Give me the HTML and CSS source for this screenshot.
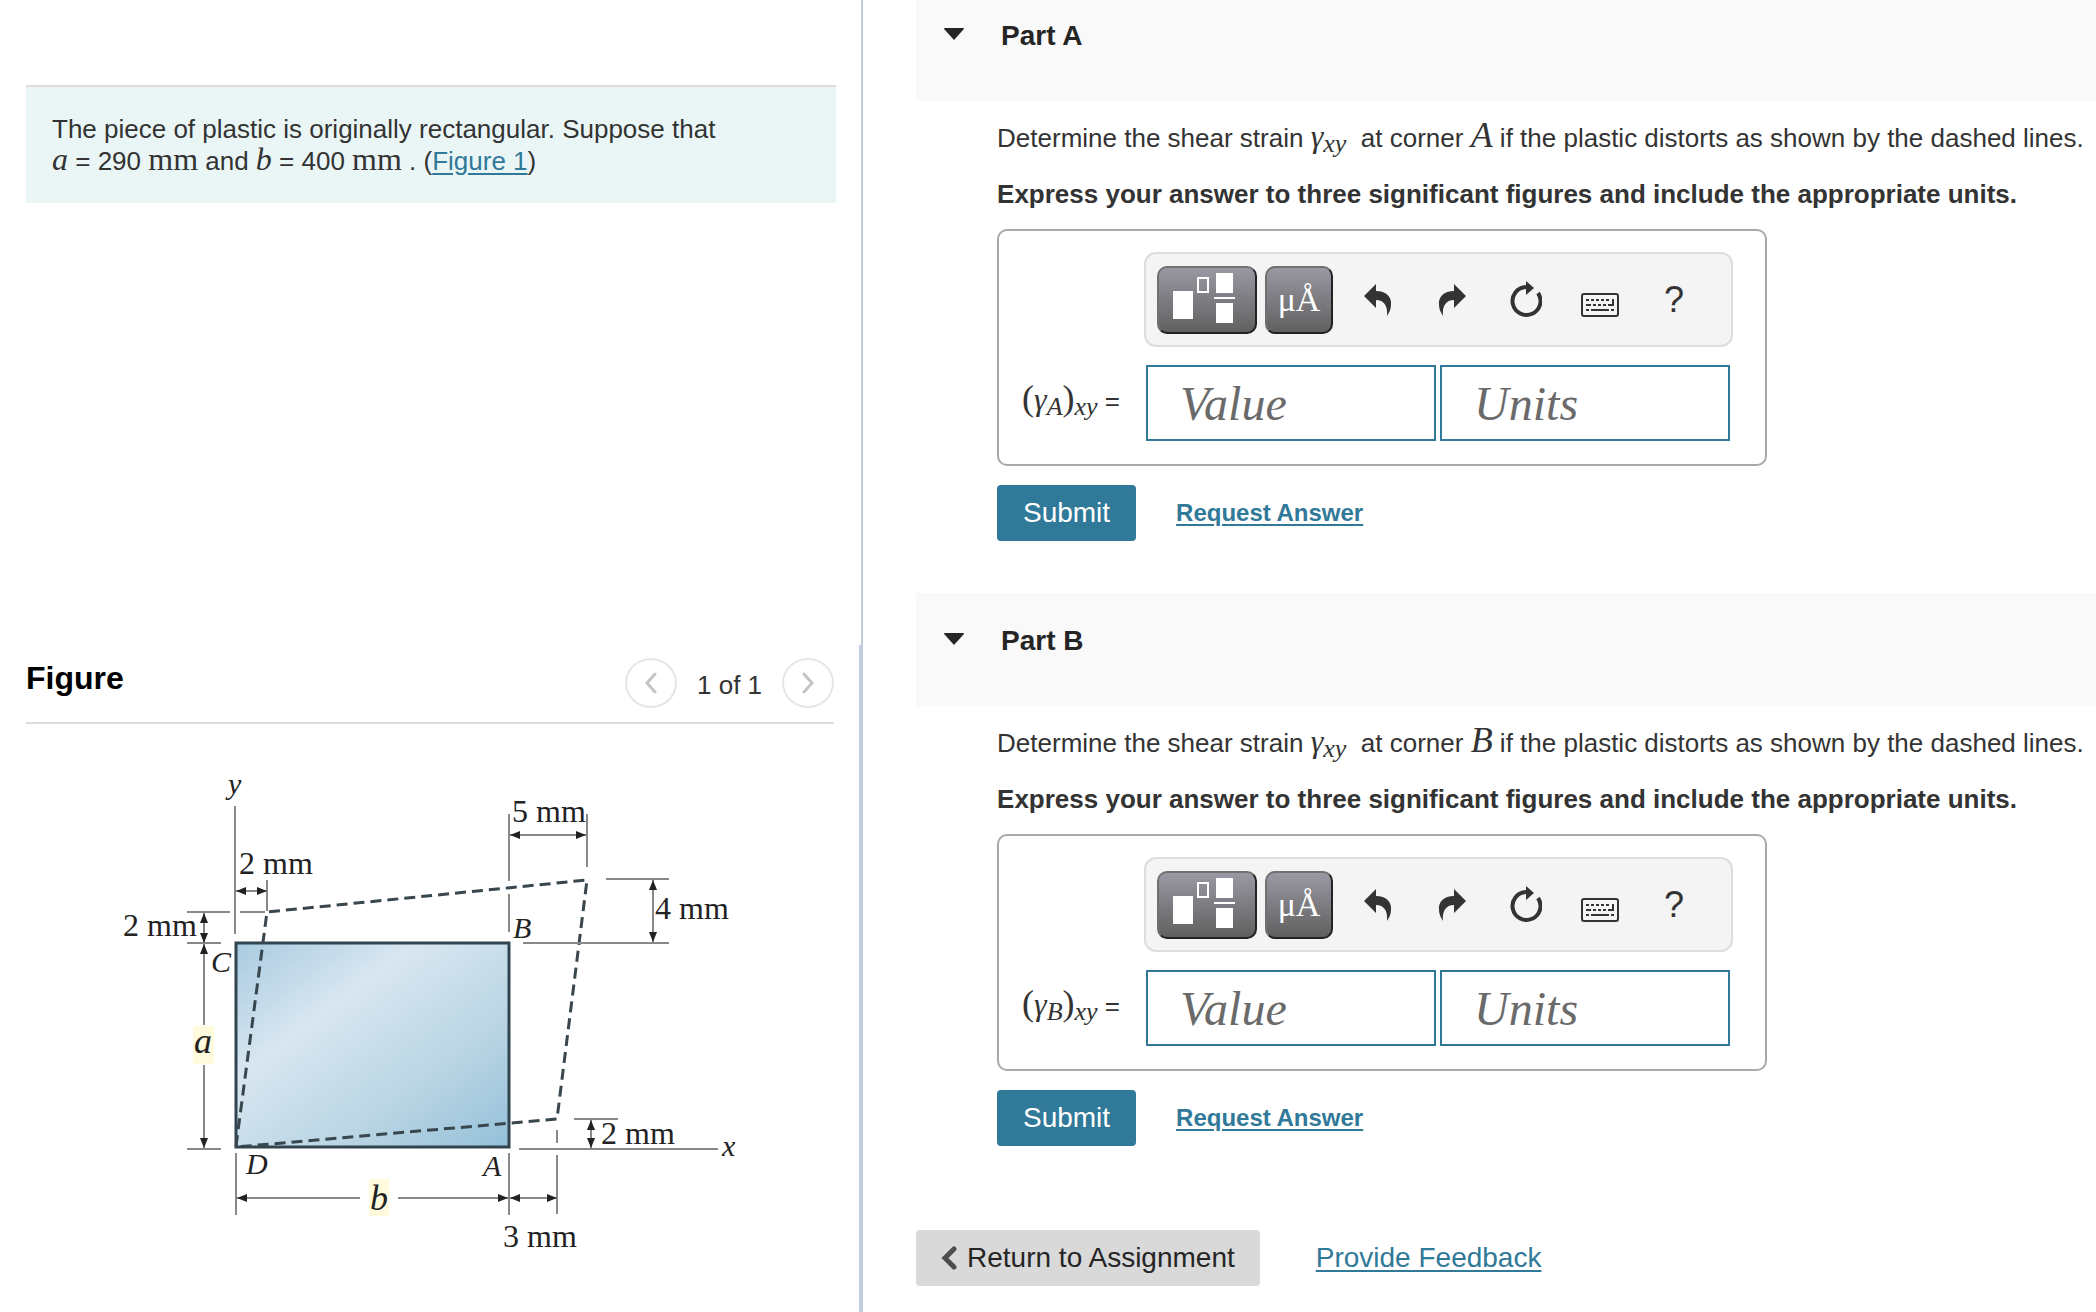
FILE: index.html
```html
<!DOCTYPE html>
<html lang="en">
<head>
  <meta charset="UTF-8" />
  <title>Shear Strain</title>
  <meta name="viewport" content="width=device-width, initial-scale=1" />
  <link rel="stylesheet" href="styles.css">
</head>
<body>
  <!-- shared icons -->
  <svg class="sprite" aria-hidden="true">
    <symbol id="icon-undo" viewBox="0 0 28 32">
      <path d="M0 12 L12 0 V7 C22 7 28 13 27 21 C27 25 25 29 23 32 C24 22 20 16 12 16 V24 Z"/>
    </symbol>
    <symbol id="icon-redo" viewBox="0 0 28 32">
      <path d="M28 12 L16 0 V7 C6 7 0 13 1 21 C1 25 3 29 5 32 C4 22 8 16 16 16 V24 Z"/>
    </symbol>
    <symbol id="icon-reset" viewBox="0 0 32 37">
      <path d="M16 6 A14 14 0 1 0 28 12" fill="none" stroke="#333" stroke-width="4"/>
      <path d="M16 0 L24 7 L16 14 Z"/>
    </symbol>
    <symbol id="icon-keyboard" viewBox="0 0 38 24">
      <rect x="1" y="1" width="36" height="22" rx="2" fill="none" stroke="#333" stroke-width="2"/>
      <path d="M5 7H29" fill="none" stroke="#333" stroke-width="2" stroke-dasharray="3 2"/>
      <path d="M5 12H10M12 12H15M17 12H20M22 12H25M27 12H33M32 6V13M5 17H8M10 17H28M30 17H33" fill="none" stroke="#333" stroke-width="2"/>
    </symbol>
    <symbol id="icon-template" viewBox="0 0 62 50">
      <rect x="0" y="18" width="20" height="28" fill="#fff"/>
      <rect x="25" y="5" width="10" height="14" fill="none" stroke="#fff" stroke-width="2"/>
      <rect x="43" y="0" width="17" height="20" fill="#fff"/>
      <rect x="41" y="24" width="21" height="2" fill="#fff"/>
      <rect x="43" y="30" width="17" height="20" fill="#fff"/>
    </symbol>
  </svg>

  <div class="page">
    <aside class="left">
      <div class="intro-pane">
        <p class="intro">The piece of plastic is originally rectangular. Suppose that<br>
          <i class="math">a</i> = 290 <span class="math">mm</span> and <i class="math">b</i> = 400 <span class="math">mm</span> . (<a href="#figure">Figure 1</a>)</p>
      </div>

      <section class="figure-pane" id="figure">
        <div class="figure-header">
          <h2>Figure</h2>
          <div class="pager">
            <button type="button" aria-label="Previous figure"><svg width="12" height="22" viewBox="0 0 12 22"><path d="M10 2 L2 11 L10 20"/></svg></button>
            <span>1 of 1</span>
            <button type="button" aria-label="Next figure"><svg width="12" height="22" viewBox="0 0 12 22"><path d="M2 2 L10 11 L2 20"/></svg></button>
          </div>
        </div>

        <svg class="diagram" viewBox="0 0 640 500" role="img" aria-label="Plastic plate ABCD with its distorted shape">
          <defs>
            <linearGradient id="plate" x1="0" y1="0" x2="1" y2="1">
              <stop offset="0" stop-color="#a9cbe0"/>
              <stop offset="0.33" stop-color="#d8e6f1"/>
              <stop offset="0.7" stop-color="#b8d4e3"/>
              <stop offset="1" stop-color="#94c0da"/>
            </linearGradient>
            <marker id="arrow" viewBox="0 0 10 8" refX="10" refY="4" markerWidth="10" markerHeight="8" markerUnits="userSpaceOnUse" orient="auto-start-reverse">
              <path d="M0 0 L10 4 L0 8 Z" fill="#222"/>
            </marker>
          </defs>

          <rect class="plate" x="126" y="179" width="273" height="204"/>
          <path class="distorted" d="M126 382 L157 148 L477 116 L447 355 L126 383"/>

          <!-- axes and extension lines -->
          <path class="thin" d="M125 42V170 M157 116V147 M77 148H120 M130 148H155 M77 179H111 M77 385H111
            M126 389V451 M399 389V451 M447 391V450 M447 366V379 M399 50V117 M399 130V168 M477 50V103
            M496 115H559 M413 179H559 M464 355H508 M409 385H608"/>

          <!-- dimension lines -->
          <path class="thin" marker-start="url(#arrow)" marker-end="url(#arrow)" d="M126 127H157"/>
          <path class="thin" marker-start="url(#arrow)" marker-end="url(#arrow)" d="M94 149V179"/>
          <path class="thin" marker-start="url(#arrow)" d="M94 180V261"/>
          <path class="thin" marker-end="url(#arrow)" d="M94 301V384"/>
          <path class="thin" marker-start="url(#arrow)" d="M127 434H250"/>
          <path class="thin" marker-end="url(#arrow)" d="M288 434H398"/>
          <path class="thin" marker-start="url(#arrow)" marker-end="url(#arrow)" d="M400 434H447"/>
          <path class="thin" marker-start="url(#arrow)" marker-end="url(#arrow)" d="M400 71H476"/>
          <path class="thin" marker-start="url(#arrow)" marker-end="url(#arrow)" d="M543 116V178"/>
          <path class="thin" marker-start="url(#arrow)" marker-end="url(#arrow)" d="M481 356V384"/>

          <rect class="mark" x="83" y="262" width="21" height="38"/>
          <rect class="mark" x="259" y="415" width="20" height="37"/>

          <text x="129" y="110">2 mm</text>
          <text x="13" y="172">2 mm</text>
          <text x="402" y="58">5 mm</text>
          <text x="545" y="155">4 mm</text>
          <text x="491" y="380">2 mm</text>
          <text x="393" y="483">3 mm</text>
          <g class="point">
            <text x="118" y="30">y</text>
            <text x="612" y="392">x</text>
            <text x="101" y="208">C</text>
            <text x="403" y="174">B</text>
            <text x="136" y="410">D</text>
            <text x="373" y="412">A</text>
          </g>
          <g class="side">
            <text x="84" y="289">a</text>
            <text x="260" y="446">b</text>
          </g>
        </svg>
      </section>
    </aside>

    <main class="right">
      <section class="part">
        <header class="part-header">
          <svg width="20" height="12" viewBox="0 0 20 12"><path d="M1 0H19Q21 0 19 2L10 12L1 2Q-1 0 1 0Z"/></svg>
          <h2>Part A</h2>
        </header>
        <div class="part-body">
          <p>Determine the shear strain <i class="math">γ<sub>xy</sub></i> &nbsp;at corner <i class="math big">A</i> if the plastic distorts as shown by the dashed lines.</p>
          <p><strong>Express your answer to three significant figures and include the appropriate units.</strong></p>
          <form>
            <div class="answer-box">
              <div class="toolbar">
                <button type="button" class="tool wide" aria-label="Templates"><svg width="62" height="50"><use href="#icon-template"/></svg></button>
                <button type="button" class="tool" aria-label="Symbols">μÅ</button>
                <button type="button" class="icon" aria-label="Undo"><svg width="28" height="32"><use href="#icon-undo"/></svg></button>
                <button type="button" class="icon" aria-label="Redo"><svg width="28" height="32"><use href="#icon-redo"/></svg></button>
                <button type="button" class="icon" aria-label="Reset"><svg width="32" height="37"><use href="#icon-reset"/></svg></button>
                <button type="button" class="icon low" aria-label="Keyboard"><svg width="38" height="24"><use href="#icon-keyboard"/></svg></button>
                <button type="button" class="icon">?</button>
              </div>
              <label for="valueA"><span class="math paren">(</span><i class="math">γ<sub>A</sub></i><span class="math paren">)</span><i class="math"><sub>xy</sub></i> =</label>
              <div class="fields">
                <input type="text" id="valueA" placeholder="Value">
                <input type="text" aria-label="Units for part A" placeholder="Units">
              </div>
            </div>
            <div class="actions">
              <button type="submit" class="submit">Submit</button>
              <a href="#">Request Answer</a>
            </div>
          </form>
        </div>
      </section>

      <section class="part">
        <header class="part-header">
          <svg width="20" height="12" viewBox="0 0 20 12"><path d="M1 0H19Q21 0 19 2L10 12L1 2Q-1 0 1 0Z"/></svg>
          <h2>Part B</h2>
        </header>
        <div class="part-body">
          <p>Determine the shear strain <i class="math">γ<sub>xy</sub></i> &nbsp;at corner <i class="math big">B</i> if the plastic distorts as shown by the dashed lines.</p>
          <p><strong>Express your answer to three significant figures and include the appropriate units.</strong></p>
          <form>
            <div class="answer-box">
              <div class="toolbar">
                <button type="button" class="tool wide" aria-label="Templates"><svg width="62" height="50"><use href="#icon-template"/></svg></button>
                <button type="button" class="tool" aria-label="Symbols">μÅ</button>
                <button type="button" class="icon" aria-label="Undo"><svg width="28" height="32"><use href="#icon-undo"/></svg></button>
                <button type="button" class="icon" aria-label="Redo"><svg width="28" height="32"><use href="#icon-redo"/></svg></button>
                <button type="button" class="icon" aria-label="Reset"><svg width="32" height="37"><use href="#icon-reset"/></svg></button>
                <button type="button" class="icon low" aria-label="Keyboard"><svg width="38" height="24"><use href="#icon-keyboard"/></svg></button>
                <button type="button" class="icon">?</button>
              </div>
              <label for="valueB"><span class="math paren">(</span><i class="math">γ<sub>B</sub></i><span class="math paren">)</span><i class="math"><sub>xy</sub></i> =</label>
              <div class="fields">
                <input type="text" id="valueB" placeholder="Value">
                <input type="text" aria-label="Units for part B" placeholder="Units">
              </div>
            </div>
            <div class="actions">
              <button type="submit" class="submit">Submit</button>
              <a href="#">Request Answer</a>
            </div>
          </form>
        </div>
      </section>

      <footer class="footer">
        <button type="button" class="return"><svg width="16" height="24" viewBox="0 0 16 24"><path d="M13 3 L4 12 L13 21"/></svg>Return to Assignment</button>
        <a href="#">Provide Feedback</a>
      </footer>
    </main>
  </div>
</body>
</html>
```
FILE: styles.css
```css
* {
  box-sizing: border-box;
}
body {
  margin: 0;
  font-family: "Liberation Sans", Arial, sans-serif;
  font-size: 26px;
  line-height: 32px;
  color: #333;
  background: #fff;
}
h2, p {
  margin: 0;
}
a {
  color: #317999;
  text-decoration: underline;
  text-underline-offset: 3px;
}
button {
  font-family: inherit;
  cursor: pointer;
}
.sprite {
  display: none;
}
.page {
  display: grid;
  grid-template-columns: 7fr 10fr;
  min-height: 100vh;
}

/* left column */
.left {
  display: flex;
  flex-direction: column;
}
.intro-pane {
  height: 645px;
  padding: 85px 25px 0 26px;
  border-right: 2px solid #bfcddd;
}
.intro {
  padding: 26px;
  border-top: 2px solid #ddd;
  background: #eaf6f6;
}
.figure-pane {
  flex: 1;
  padding: 0 25px 0 26px;
  border-right: 4px solid #c0cddf;
}
.figure-header {
  display: flex;
  justify-content: space-between;
  align-items: center;
  height: 79px;
  border-bottom: 2px solid #ddd;
}
.figure-header h2 {
  font-size: 32px;
  line-height: 40px;
  color: #000;
  margin-bottom: 12px;
}
.pager {
  display: flex;
  align-items: center;
  gap: 20px;
  margin-bottom: 2px;
}
.pager span {
  padding-top: 5px;
}
.pager button {
  display: flex;
  align-items: center;
  justify-content: center;
  width: 52px;
  height: 50px;
  padding: 0;
  background: #fff;
  border: 2px solid #e6e6e6;
  border-radius: 50%;
}
.pager path {
  fill: none;
  stroke: #c4c4c4;
  stroke-width: 3;
  stroke-linecap: round;
}
.diagram {
  display: block;
  width: 640px;
  max-width: 100%;
  margin: 40px 0 0 84px;
  font-family: "Liberation Serif", serif;
  font-size: 32px;
}
.diagram text {
  fill: #222;
}
.diagram .point {
  font-style: italic;
  font-size: 30px;
}
.diagram .side {
  font-style: italic;
  font-size: 36px;
}
.thin {
  fill: none;
  stroke: #888;
  stroke-width: 2;
}
.plate {
  fill: url(#plate);
  stroke: #30454f;
  stroke-width: 3;
}
.distorted {
  fill: none;
  stroke: #38464e;
  stroke-width: 3;
  stroke-dasharray: 11 6;
}
.mark {
  fill: #fffbdc;
}

/* math bits */
.math {
  font-family: "Liberation Serif", serif;
  font-size: 32px;
  line-height: 0;
}
.math.big {
  font-size: 36px;
}
.math sub {
  font-size: 26px;
  line-height: 0;
  vertical-align: -5px;
}
.math.paren {
  font-size: 36px;
}

/* right column */
.right {
  margin: -12px 0 0 53px;
}
.part-header {
  display: flex;
  gap: 37px;
  height: 113px;
  padding: 32px 28px;
  background: #f9f9f9;
}
.part-header h2 {
  font-size: 28px;
  color: #252525;
}
.part-header svg {
  margin-top: 8px;
  fill: #252525;
}
.part-body {
  padding: 21px 0 52px 81px;
}
.part-body p {
  margin-bottom: 24px;
}
.part-body form {
  margin-top: -5px;
}
.answer-box {
  display: grid;
  grid-template-columns: 122px minmax(0, 1fr);
  row-gap: 18px;
  align-items: center;
  max-width: 770px;
  height: 237px;
  padding: 21px 32px 23px 23px;
  border: 2px solid #a9a9a9;
  border-radius: 10px;
}
.toolbar {
  grid-column: 2;
  display: flex;
  align-items: center;
  height: 95px;
  padding-left: 11px;
  background: #f4f4f4;
  border: 2px solid #ddd;
  border-radius: 12px;
}
.tool {
  display: flex;
  flex-shrink: 0;
  align-items: center;
  justify-content: center;
  width: 68px;
  height: 68px;
  margin-right: 8px;
  padding: 0;
  font-family: "Liberation Serif", serif;
  font-size: 34px;
  color: #fff;
  background: linear-gradient(#9a98a3, #606060);
  border: 2px solid #222;
  border-top-color: #707070;
  border-left-color: #707070;
  border-radius: 10px;
}
.tool.wide {
  width: 100px;
  padding-right: 6px;
  padding-bottom: 4px;
}
.icon {
  display: flex;
  align-items: center;
  justify-content: center;
  width: 74px;
  height: 68px;
  padding: 0;
  font-size: 36px;
  color: #333;
  background: none;
  border: 0;
}
.icon svg {
  fill: #333;
}
.icon.low {
  padding-top: 10px;
}
.answer-box label {
  padding-bottom: 4px;
  white-space: nowrap;
}
.fields {
  display: flex;
  gap: 4px;
  padding: 0 3px 0 2px;
}
.fields input {
  flex: 1;
  min-width: 0;
  height: 76px;
  padding: 0 32px;
  font-family: "Liberation Serif", serif;
  font-size: 48px;
  font-style: italic;
  color: #333;
  border: 2px solid #317999;
  border-radius: 0;
}
.fields input::placeholder {
  color: #6a6a6a;
  opacity: 1;
}
.actions {
  display: flex;
  align-items: center;
  gap: 40px;
  margin-top: 19px;
}
.actions a {
  font-size: 24px;
  font-weight: bold;
}
.submit {
  width: 139px;
  height: 56px;
  font-size: 28px;
  color: #fff;
  background: #317999;
  border: 0;
  border-radius: 4px;
}
.footer {
  display: flex;
  align-items: center;
  gap: 56px;
  padding: 32px 0 24px;
  font-size: 28px;
}
.return {
  display: flex;
  align-items: center;
  gap: 10px;
  height: 56px;
  padding: 0 25px;
  font-size: 28px;
  color: #252525;
  background: #d9d9d9;
  border: 0;
  border-radius: 4px;
}
.return path {
  fill: none;
  stroke: #4d4d4d;
  stroke-width: 5;
  stroke-linecap: round;
}
```
